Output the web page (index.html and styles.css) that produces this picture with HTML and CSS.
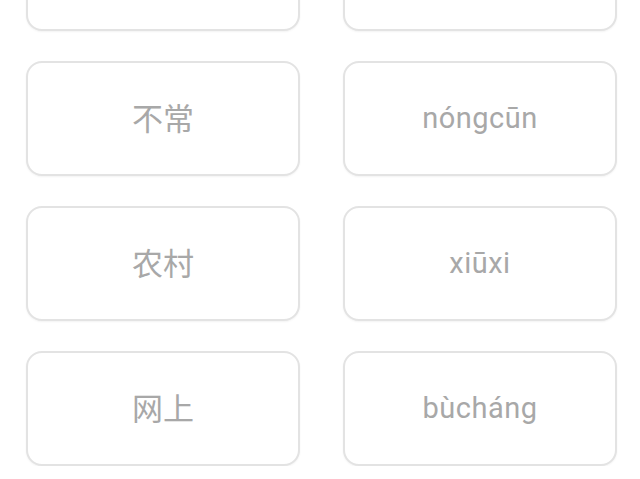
FILE: index.html
```html
<!DOCTYPE html>
<html lang="zh-CN">
<head>
    <meta charset="UTF-8">
    <meta name="viewport" content="width=device-width, initial-scale=1.0">
    <title>词语配对</title>
    <link rel="stylesheet" href="styles.css">
</head>
<body>
    <div class="board">
        <div class="card"></div>
        <div class="card pinyin"></div>
        <div class="card">不常</div>
        <div class="card pinyin">nóngcūn</div>
        <div class="card">农村</div>
        <div class="card pinyin">xiūxi</div>
        <div class="card">网上</div>
        <div class="card pinyin">bùcháng</div>
    </div>
</body>
</html>
```

FILE: styles.css
```css
*{
    margin:0;
    padding:0;
    box-sizing:border-box;
}
html,body{
    background:#fff;
    overflow:hidden;
}
/* 两列卡片，页面已向下滚动一部分 */
.board{
    display:grid;
    grid-template-columns:274px 274px;
    grid-auto-rows:115px;
    column-gap:43px;
    row-gap:30px;
    margin-top:-84px;
    padding-left:26px;
}
.card{
    display:flex;
    align-items:center;
    justify-content:center;
    padding-bottom:5px;
    border:2px solid #e3e3e3;
    border-radius:16px;
    background:#fff;
    box-shadow:0 1px 2px rgba(0,0,0,0.05);
    color:#a8a8a8;
    font-size:31px;
    font-family:"Noto Sans CJK SC", sans-serif;
}
.card.pinyin{
    padding-bottom:2px;
    font-family:Roboto, "Noto Sans", sans-serif;
    font-size:29px;
    letter-spacing:0.5px;
}
```
